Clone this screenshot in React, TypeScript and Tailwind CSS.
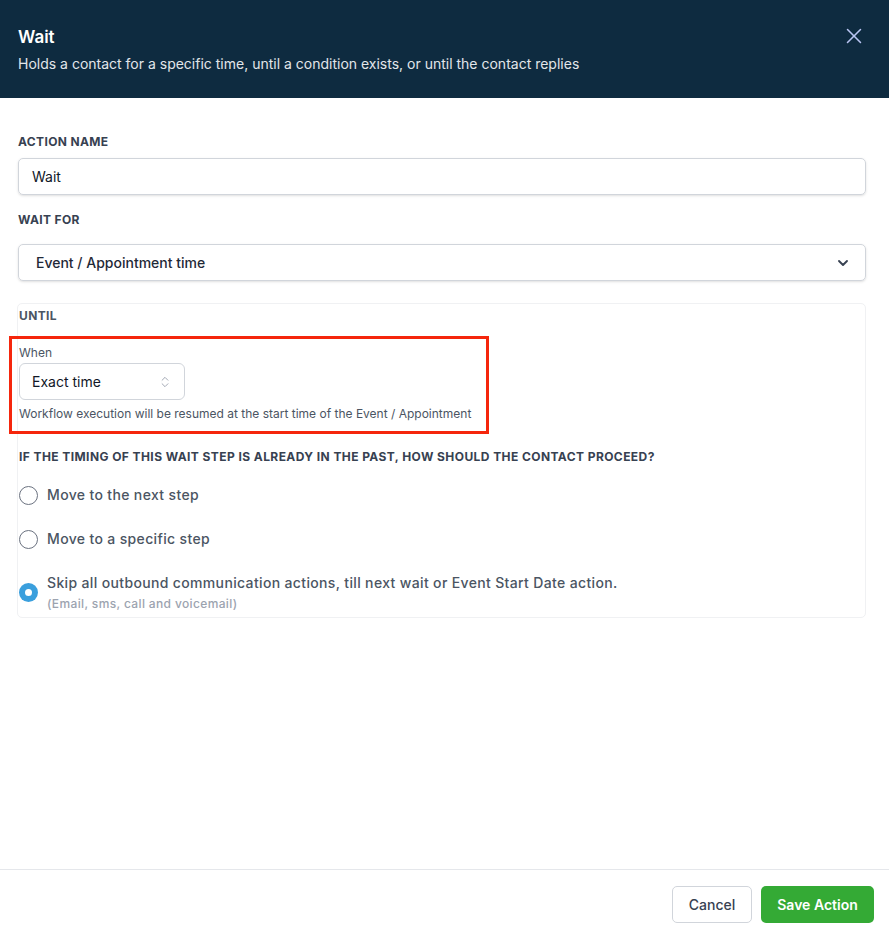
import { ChevronDown, ChevronsUpDown, X } from "lucide-react";

const options = [
  { id: "next", label: "Move to the next step" },
  { id: "specific", label: "Move to a specific step" },
  {
    id: "skip",
    label: "Skip all outbound communication actions, till next wait or Event Start Date action.",
    hint: "(Email, sms, call and voicemail)",
  },
];

const Radio = ({ checked }: { checked: boolean }) =>
  checked ? (
    <span className="flex h-[19px] w-[19px] shrink-0 items-center justify-center rounded-full bg-[#3a9fdd]">
      <span className="h-[7px] w-[7px] rounded-full bg-white" />
    </span>
  ) : (
    <span className="h-[19px] w-[19px] shrink-0 rounded-full border border-[#6b7280] bg-white" />
  );

const App = () => {
  const selected = "skip";

  return (
    <div
      className="flex h-[936px] flex-col bg-white"
      style={{ fontFamily: "Inter, 'Noto Sans', sans-serif" }}
    >
      {/* Header */}
      <div className="flex h-[98px] shrink-0 items-start justify-between bg-[#0e2b40] px-[18px] pt-[24px]">
        <div>
          <h1 className="text-[17px] font-semibold leading-[26px] text-white">Wait</h1>
          <p className="mt-[4px] text-[14px] leading-[20px] text-[#e2e6ea]">
            Holds a contact for a specific time, until a condition exists, or until the contact replies
          </p>
        </div>
        <button className="-mt-[1px] mr-[4px] text-[#b9c4f2]">
          <X className="h-[26px] w-[26px]" strokeWidth={1.4} />
        </button>
      </div>

      {/* Body */}
      <div className="flex-1 pl-[18px] pr-[23px] pt-[36px]">
        <label className="block text-[12px] font-bold leading-[16px] tracking-[0.03em] text-[#374151]">
          ACTION NAME
        </label>
        <div className="mt-[8px] flex h-[37px] items-center rounded-[5px] border border-[#d1d5db] px-[13px] text-[14px] text-[#111827] shadow-sm">
          Wait
        </div>

        <label className="mt-[17px] block text-[12px] font-bold leading-[16px] tracking-[0.03em] text-[#374151]">
          WAIT FOR
        </label>
        <div className="mt-[16px] flex h-[37px] items-center justify-between rounded-[5px] border border-[#d1d5db] pl-[17px] pr-[14px] text-[14px] font-medium text-[#1f2937] shadow-sm">
          <span>Event / Appointment time</span>
          <ChevronDown className="h-[16px] w-[16px] text-[#374151]" strokeWidth={2.8} />
        </div>

        {/* Until card */}
        <div className="mt-[22px] -ml-px rounded-[5px] border border-[#f0f1f3] pb-[5px] pt-[4px] pl-px">
          <div className="text-[12px] font-bold leading-[16px] tracking-[0.03em] text-[#4b5563]">UNTIL</div>

          <div className="mt-[12px] -ml-[10px] w-[480px] border-[3px] border-[#f5260c] pb-[9px] pl-[7px] pt-[6px]">
            <div className="text-[12px] leading-[16px] text-[#4b5563]">When</div>
            <div className="mt-[2px] flex h-[37px] w-[166px] items-center justify-between rounded-[6px] border border-[#d1d5db] pl-[12px] pr-[12px] text-[14px] text-[#111827]">
              <span>Exact time</span>
              <ChevronsUpDown className="h-[14px] w-[14px] text-[#9ca3af]" strokeWidth={1.6} />
            </div>
            <p className="mt-[6px] text-[12px] leading-[16px] text-[#4b5563]">
              Workflow execution will be resumed at the start time of the Event / Appointment
            </p>
          </div>

          <div className="mt-[15px] text-[12px] font-bold leading-[16px] tracking-[0.035em] text-[#374151]">
            IF THE TIMING OF THIS WAIT STEP IS ALREADY IN THE PAST, HOW SHOULD THE CONTACT PROCEED?
          </div>

          <div className="mt-[20px] flex flex-col gap-[24px]">
            {options.map((o) => (
              <div key={o.id} className="flex items-center gap-[9px]">
                <Radio checked={o.id === selected} />
                <div>
                  <div className="text-[14px] font-medium leading-[20px] tracking-[0.025em] text-[#4b5563]">
                    {o.label}
                  </div>
                  {o.hint && (
                    <div className="mt-[3px] text-[12px] font-medium leading-[16px] tracking-[0.03em] text-[#9ca3af]">
                      {o.hint}
                    </div>
                  )}
                </div>
              </div>
            ))}
          </div>
        </div>
      </div>

      {/* Footer */}
      <div className="flex h-[67px] shrink-0 items-start justify-end gap-[9px] border-t border-[#e5e7eb] pr-[15px] pt-[16px]">
        <button className="h-[37px] w-[80px] rounded-[5px] border border-[#d1d5db] bg-white text-[14px] font-medium text-[#374151]">
          Cancel
        </button>
        <button className="h-[37px] w-[113px] rounded-[5px] bg-[#34aa35] text-[14px] font-semibold text-white">
          Save Action
        </button>
      </div>
    </div>
  );
};

export default App;
